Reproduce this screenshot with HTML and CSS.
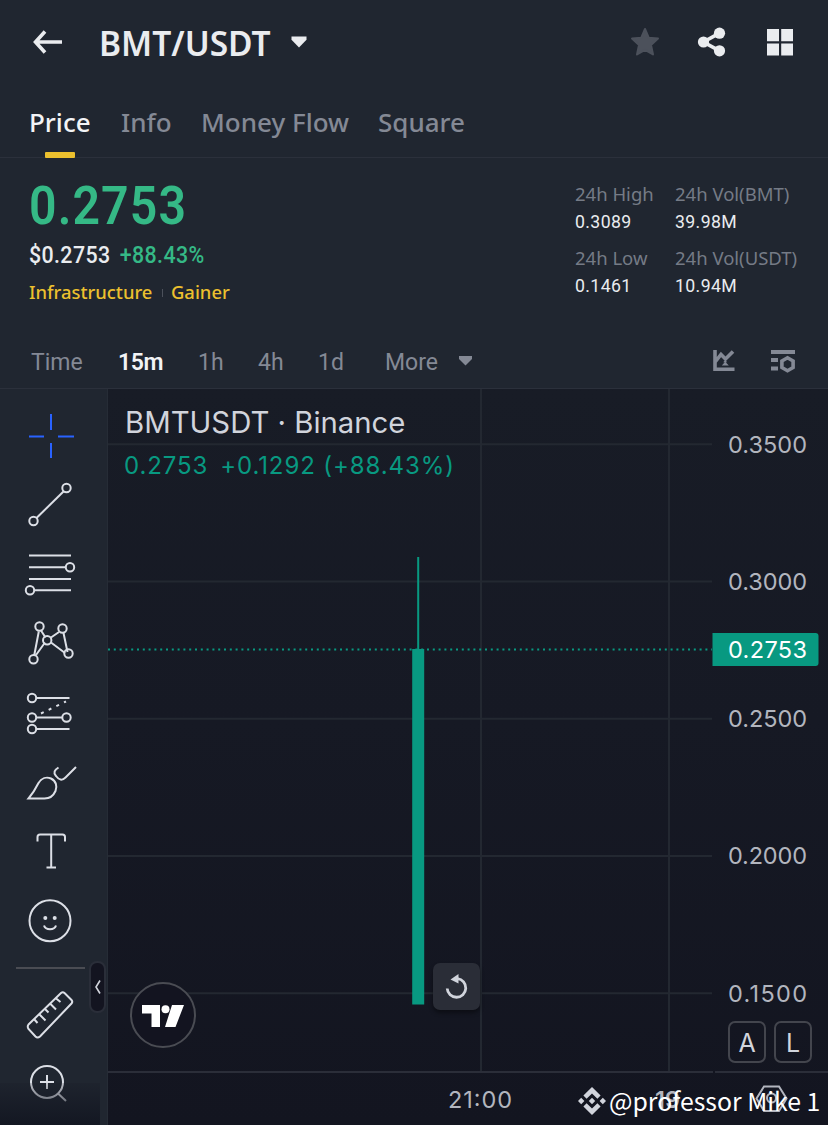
FILE: index.html
```html
<!DOCTYPE html>
<html lang="en">
  <head>
    <meta charset="UTF-8" />
    <meta name="viewport" content="width=device-width, initial-scale=1.0" />
    <title>BMT/USDT</title>
    <link rel="stylesheet" href="styles.css">
  </head>
  <body>
    <header class="topbar">
      <svg class="back" width="30" height="24" viewBox="0 0 30 24">
        <path d="M12 1.500 2.500 12 12 22.500M2.500 12H29" />
      </svg>
      <h1 class="pair">BMT/USDT</h1>
      <svg class="caret" width="16" height="12" viewBox="0 0 16 12">
        <path d="M.5.5h15v3.200L8 11.500.5 3.700z" />
      </svg>
      <div class="actions">
        <svg width="30" height="30" viewBox="0 0 30 30" class="star">
          <path d="M15 2l3.700 8.700 9.300.9-7 6.300 2 9.600-8-4.700-8 4.700 2-9.600-7-6.300 9.300-.9z" />
        </svg>
        <svg width="30" height="30" viewBox="0 0 30 30" class="share">
          <path d="M22.500 6.200 6.500 15l16 8.800" />
          <circle cx="22.500" cy="6.200" r="5.600" />
          <circle cx="6.500" cy="15" r="5.600" />
          <circle cx="22.500" cy="23.800" r="5.600" />
        </svg>
        <svg width="26" height="27" viewBox="0 0 26 27" class="grid-icon">
          <path d="M0 0h12v12.200H0zM14.200 0h12v12.200h-12zM0 14.500h12v12H0zM14.200 14.500h12v12h-12z" />
        </svg>
      </div>
    </header>

    <nav class="tabs">
      <a class="tab tab-price active">Price</a>
      <a class="tab tab-info">Info</a>
      <a class="tab tab-flow">Money Flow</a>
      <a class="tab tab-square">Square</a>
    </nav>

    <section class="summary">
      <div class="price-box">
        <div class="price">0.2753</div>
        <div class="fiat"><span>$0.2753</span><span class="up">+88.43%</span></div>
        <div class="tags"><span class="tag-infra">Infrastructure</span><i></i><span>Gainer</span></div>
      </div>
      <dl class="stats">
        <div><dt>24h High</dt><dd>0.3089</dd></div>
        <div><dt>24h Vol(BMT)</dt><dd>39.98M</dd></div>
        <div><dt>24h Low</dt><dd>0.1461</dd></div>
        <div><dt>24h Vol(USDT)</dt><dd>10.94M</dd></div>
      </dl>
    </section>

    <nav class="intervals">
      <span class="int-time">Time</span>
      <span class="int-15m selected">15m</span>
      <span class="int-1h">1h</span>
      <span class="int-4h">4h</span>
      <span class="int-1d">1d</span>
      <span class="int-more">More</span>
      <svg class="more-caret" width="13" height="10" viewBox="0 0 13 10">
        <path d="M0 0h13v3L6.500 9.500 0 3z" />
      </svg>
      <div class="interval-icons">
        <svg width="22" height="22" viewBox="0 0 22 22">
          <path class="line" d="M2 0v19.300h19.500M2.500 11.500 8 4.500l4.500 4.500 7.500-7.500" />
          <path d="M12.200 10l2 2.300h-4zM8.800 15.500l3.400-3.800 3.600 3.800z" />
        </svg>
        <svg width="25" height="23" viewBox="0 0 25 23">
          <path d="M0 0h24v4H0zM0 8h7v4H0zM0 16.500h7v4H0z" />
          <path class="line" d="M16.500 7.800l5.600 3.200v6.500l-5.600 3.200-5.600-3.200v-6.500z" />
        </svg>
      </div>
    </nav>

    <main class="workspace">
      <aside class="tools">
        <svg class="cross" width="60" height="69" viewBox="0 0 60 69">
          <path d="M31 13v16M31 42v15M9 35.500h15M38 35.500h16" />
        </svg>
        <svg width="60" height="70" viewBox="0 0 60 70">
          <path d="M16.500 48 43.500 21.500" />
          <circle cx="13.500" cy="51" r="4.200" /><circle cx="46.500" cy="18" r="4.200" />
        </svg>
        <svg width="60" height="71" viewBox="0 0 60 71">
          <path d="M9 15.500h42M9 27.300h37M9 39h42M14 50.300h37" />
          <circle cx="50" cy="27.300" r="4.200" /><circle cx="10" cy="50.300" r="4.200" />
        </svg>
        <svg width="60" height="70" viewBox="0 0 60 70">
          <path d="M18.800 20.500 14.200 44.500M21 19.500l4.500 7M16 44l9-12.500M31 26.500l8-5.500M43.500 22l4 19M31 31.500l14 10.500" />
          <circle cx="19.500" cy="15.500" r="4.200" /><circle cx="42.500" cy="17.500" r="4.200" /><circle cx="27.200" cy="29.300" r="4.200" />
          <circle cx="48.500" cy="42.500" r="4.200" /><circle cx="13.500" cy="48.300" r="4.200" />
        </svg>
        <svg width="60" height="70" viewBox="0 0 60 70">
          <path d="M16 17h33.500M16 36.500h26M16 48h33.500" />
          <path class="dots" d="M21 32.500 46 20.500" />
          <circle cx="12" cy="17" r="4.200" /><circle cx="12" cy="36.500" r="4.200" /><circle cx="12" cy="48" r="4.200" /><circle cx="46.500" cy="36.500" r="4.200" />
        </svg>
        <svg width="60" height="69" viewBox="0 0 60 69">
          <path d="M8.500 47.500C14 41 16 37 18.500 32c3-5 8-6.500 12.500-4.500 5 2.300 6.500 8 4.500 12.500-2.200 5-6 7.500-11 7.500zM38.500 16.500c-4 2.500-5.500 5-2.500 8.500 3 4 6 5 9.500 1.500L56 16" />
        </svg>
        <svg width="60" height="69" viewBox="0 0 60 69">
          <path d="M17.500 21.500V17q0-2.500 2.500-2.500h22.500q2.500 0 2.500 2.500v4.500M31.200 15v32M26.500 47.500h9.500" />
        </svg>
        <svg width="60" height="81" viewBox="0 0 60 81">
          <circle cx="30" cy="31.800" r="20.500" />
          <path d="M24 36.500c1.500 5 10.500 5 12 0" />
          <circle class="fill" cx="25.300" cy="29" r="2" /><circle class="fill" cx="34.700" cy="29" r="2" />
        </svg>
        <hr class="divider" />
        <svg width="60" height="83" viewBox="0 0 60 83">
          <path d="M8.500 55.500 41 24q1.800-1.500 3.500 0l7 7q1.500 1.800 0 3.500L20 67.500q-2.500 2-4.500 0l-7-7.500q-1.500-2.500 0-4.500z" />
          <path d="M14 50l3.500 4M19 45l6.500 6.500M24.500 39.500l4 4M30 34.500l6 6M35.500 29l5 4" />
        </svg>
        <svg width="60" height="60" viewBox="0 0 60 60">
          <circle cx="27" cy="30" r="16" />
          <path d="M20 30h14M27 23v14M38 41.500l8 7.500" />
        </svg>
      </aside>

      <section class="chart">
        <svg class="plot" width="720" height="736" viewBox="0 0 720 736">
          <path class="grid" d="M0 55.200h604M0 192.500h604M0 329.800h604M0 467h604M0 604.200h604M373 0v683M561 0v683" />
          <path class="axis" d="M0 683h605M607 683h113" />
          <path class="last" d="M0 260.500h604" />
          <path class="candle" d="M309.200 168h2v92h5v355.500h-12V260h5z" />
          <path class="badge" d="M604.500 244h103q3 0 3 3v27q0 3-3 3h-103z" />
          <text x="620" y="63.500" textLength="79">0.3500</text>
          <text x="620" y="200.500" textLength="79">0.3000</text>
          <text x="620" y="338" textLength="79">0.2500</text>
          <text x="620" y="475" textLength="79">0.2000</text>
          <text x="620" y="612.500" textLength="79">0.1500</text>
          <text class="now" x="620" y="269" textLength="79">0.2753</text>
          <text x="340" y="719" textLength="64">21:00</text>
          <text class="day" x="547" y="719">19</text>
          <path class="settings" d="M656 697.500h15l7.500 12-7.500 12.500h-15l-7.500-12.500z" />
          <circle class="settings" cx="663.500" cy="709" r="4.500" />
        </svg>

        <div class="legend">
          <div class="symbol">BMTUSDT · Binance</div>
          <div class="quote"><span>0.2753</span><span class="change">+0.1292 (+88.43%)</span></div>
        </div>

        <div class="tv-logo">
          <svg width="42" height="22" viewBox="0 0 42 22">
            <path d="M0 0h18v22H9.500V8.500H0zM30 0h12l-8.500 22H23z" />
            <circle cx="23.500" cy="4.300" r="4" />
          </svg>
        </div>

        <button class="reset">
          <svg width="24" height="26" viewBox="0 0 24 26">
            <path class="arc" d="M2.200 14.500a9.300 9.300 0 1 0 10.300-9.800" />
            <path class="head" d="M5.500 5.500 13.500 0v9.500z" />
          </svg>
        </button>

        <div class="scale-buttons"><button>A</button><button>L</button></div>

        <div class="watermark">
          <svg width="28" height="28" viewBox="0 0 28 28">
            <path d="M14 0l8.600 8.600-3.200 3.200L14 6.400l-5.400 5.400-3.200-3.200zM14 28l8.600-8.600-3.200-3.200-5.400 5.400-5.400-5.400-3.200 3.200zM3.200 10.800 6.400 14l-3.200 3.200L0 14zM24.800 10.800 28 14l-3.200 3.200-3.200-3.200zM14 10.800l3.200 3.200-3.200 3.200-3.200-3.200z" />
          </svg>
          <span>@professor Mike 1</span>
        </div>
      </section>

      <button class="collapse">
        <svg width="6" height="14" viewBox="0 0 6 14"><path d="M5 .5 1 7l4 6.500" /></svg>
      </button>
    </main>
  </body>
</html>
```

FILE: styles.css
```css
* {
  box-sizing: border-box;
}

body {
  margin: 0;
  width: 828px;
  height: 1125px;
  overflow: hidden;
  background: #202630;
  color: #eaecef;
  font-family: "Noto Sans", sans-serif;
}

svg {
  display: block;
  flex: none;
}

button {
  padding: 0;
  border: none;
  font-family: inherit;
}

.topbar {
  display: flex;
  align-items: center;
  height: 84px;
  padding: 0 35px 0 33px;
}

.back {
  fill: none;
  stroke: #eaecef;
  stroke-width: 3.6;
}

.pair {
  width: 171px;
  margin: 1px 0 0 36px;
  font-size: 33.5px;
  font-weight: 600;
  line-height: 40px;
  white-space: nowrap;
}

.caret {
  margin-left: 21px;
  fill: #eaecef;
}

.actions {
  display: flex;
  align-items: center;
  gap: 38px;
  margin-left: auto;
}

.star {
  margin-right: -1px;
  fill: #4c515b;
  stroke: #4c515b;
  stroke-width: 2;
  stroke-linejoin: round;
}

.share {
  fill: #eaecef;
}

.share path {
  fill: none;
  stroke: #eaecef;
  stroke-width: 3.6;
}

.grid-icon {
  margin-left: 2px;
  fill: #eaecef;
}

.tabs {
  display: flex;
  height: 74px;
  padding: 19px 0 0 29px;
  border-bottom: 1px solid #2b303b;
}

.tab {
  position: relative;
  font-size: 26px;
  font-weight: 500;
  line-height: 38px;
  white-space: nowrap;
  color: #848995;
}

.tab-price {
  width: 92px;
}

.tab-info {
  width: 80px;
}

.tab-flow {
  width: 177px;
}

.tab.active {
  color: #f3f4f6;
}

.tab.active::after {
  content: "";
  position: absolute;
  left: 16px;
  top: 49px;
  width: 30px;
  height: 6px;
  border-radius: 1px;
  background: #ecc02e;
}

.summary {
  display: flex;
  justify-content: space-between;
  height: 178px;
  padding: 16px 0 0 29px;
}

.price {
  height: 64px;
  font-family: Roboto, sans-serif;
  font-size: 53px;
  font-weight: 600;
  line-height: 64px;
  letter-spacing: 1.2px;
  color: #35b986;
  transform: scaleX(0.91);
  transform-origin: left;
}

.fiat {
  display: flex;
  gap: 10px;
  font-family: Roboto, sans-serif;
  font-size: 23px;
  font-weight: 500;
  line-height: 36px;
  letter-spacing: 0.4px;
  transform: scaleX(0.93);
  transform-origin: left;
}

.fiat .up {
  color: #35b986;
}

.tags {
  display: flex;
  align-items: center;
  height: 34px;
  font-size: 18.4px;
  font-weight: 500;
  color: #ecc02e;
}

.tag-infra {
  width: 125px;
}

.tags i {
  width: 1px;
  height: 8px;
  margin: 4px 8px 0;
  background: #4c515b;
}

.stats {
  display: grid;
  grid-template-columns: 100px 153px;
  grid-auto-rows: 63.500px;
  margin: 6px 0 0;
}

.stats dt {
  font-size: 18.500px;
  line-height: 28px;
  white-space: nowrap;
  color: #757b86;
}

.stats dd {
  margin: 0;
  font-family: Roboto, sans-serif;
  font-size: 19px;
  line-height: 27px;
  letter-spacing: 0.4px;
  transform: scaleX(0.93);
  transform-origin: left;
}

.intervals {
  display: flex;
  align-items: center;
  height: 53px;
  padding: 0 32px 0 31px;
  border-bottom: 1px solid #2b303b;
  font-family: Roboto, sans-serif;
  font-size: 23px;
  color: #848995;
}

.int-time {
  width: 87px;
}

.int-15m {
  width: 80px;
}

.intervals .selected {
  font-weight: 600;
  letter-spacing: -0.4px;
  color: #f3f4f6;
}

.int-1h,
.int-4h {
  width: 60px;
}

.int-1d {
  width: 67px;
}

.int-more {
  width: 74px;
}

.more-caret {
  margin-top: -3px;
  fill: #848995;
}

.interval-icons {
  display: flex;
  align-items: center;
  gap: 36px;
  margin: -2px 0 0 auto;
  fill: #848995;
}

.interval-icons .line {
  fill: none;
  stroke: #848995;
  stroke-width: 3.6;
}

.workspace {
  position: relative;
  display: flex;
  height: 736px;
}

.tools {
  width: 108px;
  padding: 12px 0 0 20px;
  border-right: 1px solid #262c36;
  fill: none;
  stroke: #dcdfe6;
  stroke-width: 2;
}

.tools::after {
  content: "";
  position: absolute;
  left: 0;
  bottom: 0;
  width: 100px;
  height: 42px;
  background: linear-gradient(rgba(19, 20, 32, 0.15), #131722);
}

.tools .cross {
  stroke: #2962ff;
}

.tools .dots {
  stroke-dasharray: 3 5.500;
}

.tools .fill {
  fill: #dcdfe6;
  stroke: none;
}

.divider {
  width: 69px;
  height: 2px;
  margin: -3px 0 0 -4px;
  border: none;
  background: #4a4c53;
}

.chart {
  position: relative;
  width: 720px;
  background: linear-gradient(#181c26, #161924 45%, #131520);
  font-family: Inter, sans-serif;
}

.plot {
  fill: #b2b5be;
  font-size: 23.500px;
}

.grid {
  fill: none;
  stroke: #232831;
  stroke-width: 2;
}

.axis {
  stroke: #2b2e39;
  stroke-width: 2;
}

.last {
  stroke: #089981;
  stroke-width: 2;
  stroke-dasharray: 2 3.800;
}

.candle,
.badge {
  fill: #089981;
}

.plot .now {
  fill: #fff;
}

.plot .day {
  font-weight: 600;
}

.settings {
  fill: none;
  stroke: #b2b5be;
  stroke-width: 2;
}

.legend {
  position: absolute;
  left: 16px;
  top: 15px;
}

.symbol {
  margin-left: 1px;
  font-size: 29.3px;
  line-height: 38px;
  white-space: nowrap;
  color: #d1d4dc;
}

.quote {
  display: flex;
  gap: 12px;
  margin-top: 6px;
  font-size: 24px;
  line-height: 36px;
  letter-spacing: 0.9px;
  white-space: nowrap;
  color: #089981;
}

.tv-logo {
  position: absolute;
  left: 22px;
  top: 593px;
  display: flex;
  align-items: center;
  justify-content: center;
  width: 66px;
  height: 66px;
  padding-top: 2px;
  border: 2px solid #4a4c53;
  border-radius: 50%;
  background: #131420;
  fill: #fff;
}

.reset {
  position: absolute;
  left: 325px;
  top: 574px;
  display: flex;
  align-items: center;
  justify-content: center;
  width: 47px;
  height: 47px;
  border-radius: 7px;
  background: #2a2d37;
  box-shadow: 0 3px 4px rgba(0, 0, 0, 0.4);
}

.reset .arc {
  fill: none;
  stroke: #d1d4dc;
  stroke-width: 2.8;
}

.reset .head {
  fill: #d1d4dc;
}

.scale-buttons {
  position: absolute;
  left: 620px;
  top: 632px;
  display: flex;
  gap: 8px;
}

.scale-buttons button {
  width: 38px;
  height: 42px;
  padding-top: 2px;
  border: 2px solid #43454d;
  border-radius: 7px;
  background: none;
  font-size: 25px;
  color: #d1d4dc;
}

.watermark {
  position: absolute;
  left: 470px;
  top: 693px;
  display: flex;
  align-items: center;
  gap: 3px;
  height: 38px;
  font-family: "Noto Sans CJK SC", sans-serif;
  font-size: 24.800px;
  line-height: 36px;
  white-space: nowrap;
  color: #fff;
  fill: #d1d4dc;
}

.watermark span {
  margin-top: -3px;
}

.collapse {
  position: absolute;
  left: 89px;
  top: 572px;
  display: flex;
  align-items: center;
  justify-content: center;
  width: 17px;
  height: 52px;
  border: 2px solid #2a2e39;
  border-radius: 8px;
  background: #131420;
  fill: none;
  stroke: #d1d4dc;
  stroke-width: 1.6;
}
```
